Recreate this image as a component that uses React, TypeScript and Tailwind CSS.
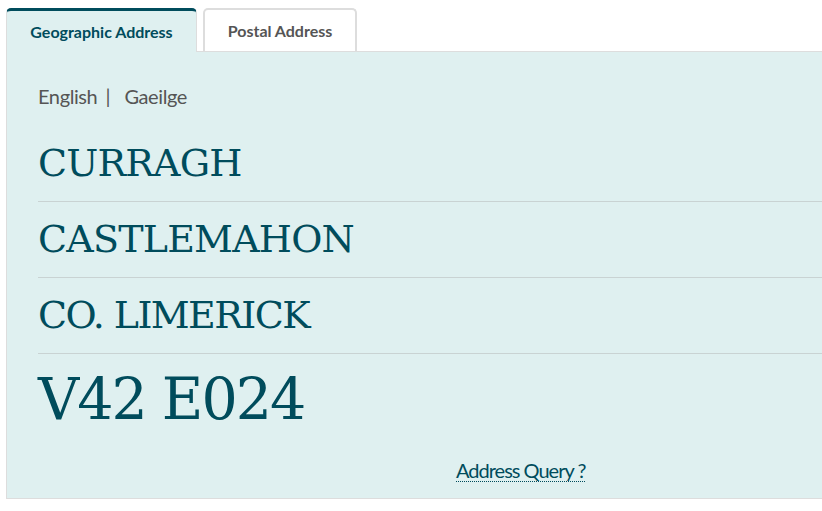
import React from "react";

const sans = "font-['Lato','Open_Sans',sans-serif]";
const slab = "font-['DejaVu_Serif','Liberation_Serif',serif]";

export default function App() {
  return (
    <div className="w-[822px] h-[511px] bg-white overflow-hidden relative">
      <div className="pl-[6px] pt-[8px]">
        <div className="flex gap-[6px] relative z-10">
          <div className={`w-[191px] h-[44px] bg-[#dff0f0] border-t-[3px] border-x border-[#ddd] border-t-[#004c5c] rounded-t-[5px] flex items-center justify-center text-[16px] font-bold text-[#004c5c] ${sans}`}>
            Geographic Address
          </div>
          <div className={`w-[154px] h-[43px] bg-white border-2 border-b-0 border-[#ddd] rounded-t-[5px] flex items-center justify-center text-[16px] font-bold text-[#555] ${sans}`}>
            Postal Address
          </div>
        </div>
        <div className="-mt-px bg-[#dff0f0] border border-r-0 border-[#ddd] h-[448px] pl-[31px] pt-[32px]">
          <div className={`text-[20px] text-[#555] ${sans} leading-[24px] flex items-center`}>
            <span className="tracking-[-0.4px]">English</span>
            <span className="ml-[8px] mr-[14px] text-[#555]">|</span>
            <span className="tracking-[-0.4px]">Gaeilge</span>
          </div>
          <div className={`${slab} text-[#004c5c]`}>
            <div className="h-[94px] border-b border-[#c9d3d3] text-[38px] leading-[1] pt-[36px] tracking-[-0.8px]">CURRAGH</div>
            <div className="h-[76px] border-b border-[#c9d3d3] text-[38px] leading-[1] pt-[18px] tracking-[-0.8px]">CASTLEMAHON</div>
            <div className="h-[76px] border-b border-[#c9d3d3] text-[38px] leading-[1] pt-[18px] tracking-[-1.6px]">CO. LIMERICK</div>
            <div className="h-[78px] text-[57px] leading-[1] pt-[17px] tracking-[-2px]">V42 E024</div>
          </div>
          <div className="pl-[418px] pt-[27px]">
            <span className={`${sans} text-[20px] text-[#004c5c] border-b border-dotted border-[#004c5c] leading-[22px] inline-block tracking-[-1px]`}>
              Address Query ?
            </span>
          </div>
        </div>
      </div>
    </div>
  );
}
